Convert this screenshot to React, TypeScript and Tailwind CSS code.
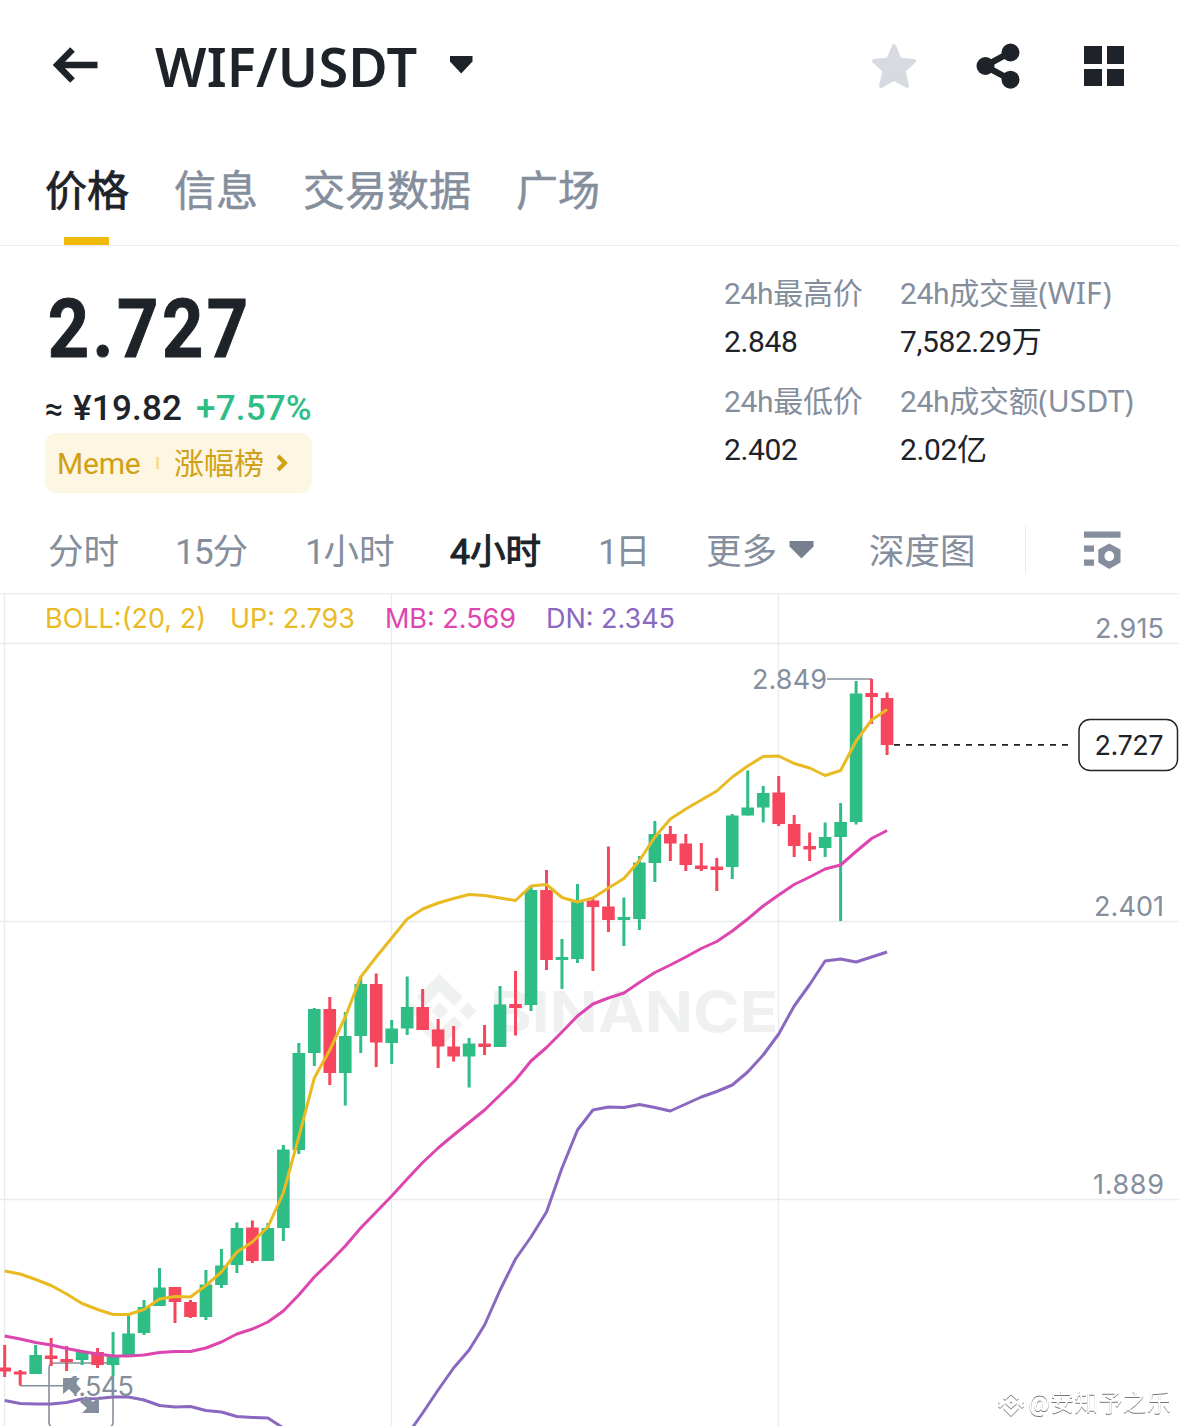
import React from "react";

type Candle = [color: "g" | "r", high: number, top: number, bottom: number, low: number];

const X0 = 4.7;
const STEP = 15.48;
const GREEN = "#2ebd85";
const RED = "#f6465d";

const candles: Candle[] = [
  ["r", 1345, 1367.5, 1371.5, 1377], ["r", 1370, 1371.5, 1374.5, 1385.5], ["g", 1345, 1355, 1374, 1374],
  ["r", 1338, 1355.5, 1359, 1366], ["r", 1346, 1359, 1362, 1371], ["g", 1350, 1352, 1360, 1365],
  ["r", 1348, 1352, 1365, 1368], ["g", 1332, 1355, 1365, 1376], ["g", 1313, 1333.5, 1355, 1355],
  ["g", 1300, 1307, 1333, 1335], ["g", 1268, 1287.5, 1306, 1306], ["r", 1287, 1287, 1302, 1323],
  ["r", 1300, 1302, 1317, 1318], ["g", 1270, 1284.5, 1317, 1320], ["g", 1249, 1265.5, 1285, 1288],
  ["g", 1222.5, 1228, 1265, 1273], ["r", 1220.5, 1227.5, 1261, 1263], ["g", 1223, 1228, 1261, 1261],
  ["g", 1145, 1149.5, 1228, 1241], ["g", 1043, 1053, 1150, 1154], ["g", 1008, 1009, 1053, 1066],
  ["r", 997, 1009, 1073, 1085], ["g", 1012, 1036, 1073, 1105.5], ["g", 976, 984, 1036, 1053],
  ["r", 973.5, 984, 1042.5, 1067], ["g", 1020, 1028.5, 1043, 1064], ["g", 976.5, 1007, 1028.5, 1035],
  ["r", 989, 1007, 1030, 1030], ["r", 1019, 1029.5, 1046.5, 1068], ["r", 1026, 1046.5, 1056.5, 1061.5],
  ["g", 1038, 1043.5, 1056.5, 1087.5], ["r", 1025, 1043.5, 1047, 1055], ["g", 986, 1004.5, 1047, 1047],
  ["r", 971, 1004, 1008, 1035.5], ["g", 886, 890, 1005, 1011], ["r", 870, 890, 960, 970],
  ["g", 939, 957, 960, 989], ["g", 884, 902, 959, 963], ["r", 899, 900.5, 907, 971],
  ["r", 846.5, 906.5, 920, 932], ["g", 897.5, 917, 920, 946], ["g", 856, 862.5, 919, 930],
  ["g", 821, 834, 863, 882], ["r", 826, 834, 843.5, 861], ["r", 834, 843.5, 865, 871],
  ["r", 843, 865.5, 869, 871], ["r", 858, 866.5, 870, 891], ["g", 814, 815.5, 867, 879],
  ["g", 770.5, 807.5, 815.5, 815.5], ["g", 786, 793, 807.5, 822.5], ["r", 776, 792.5, 824, 826],
  ["r", 815, 824, 846, 857], ["r", 832.5, 846, 849.5, 861], ["g", 822.5, 837, 848, 857],
  ["g", 803, 822, 837, 921], ["g", 681, 693.5, 822, 824.5], ["r", 679, 693, 697, 724],
  ["r", 692.5, 698, 745, 755],
];

const upper = [
  1271, 1274, 1279.5, 1285.5, 1294, 1303.5, 1309.5, 1314.5, 1314.5, 1309.5, 1299, 1296.5, 1297, 1285.5, 1272,
  1252, 1242, 1227, 1193, 1137, 1078, 1050, 1017, 977, 957, 938, 919, 909, 903, 898.5, 894.5, 895.5, 898, 900.5,
  886, 884.5, 897.5, 902, 898, 888, 878.5, 860.5, 837, 819, 809, 800, 791, 777, 766, 756.5, 756, 763.5, 768,
  775.5, 770.5, 741, 720, 709.5,
];
const middle = [
  1336, 1339, 1342.5, 1345, 1348.5, 1351.5, 1354, 1356, 1356, 1355, 1352.5, 1351.5, 1351.5, 1348, 1342, 1334,
  1329, 1322, 1311, 1295, 1277, 1262, 1246, 1228, 1212, 1196, 1179, 1162.5, 1148, 1135, 1122.5, 1110, 1095,
  1080, 1061, 1047.5, 1032, 1016, 1004, 998, 993, 982.5, 972.5, 965, 957, 948.5, 941.5, 931, 919, 906, 895,
  884.5, 877, 869, 865, 851.5, 838.5, 830.5,
];
const lower = [
  1400.5, 1403.5, 1404, 1404, 1402.5, 1399, 1398.5, 1397, 1397, 1400, 1405.5, 1407, 1406.5, 1410.5, 1412,
  1416.5, 1417.5, 1418, 1428, 1440, 1450, 1458, 1462, 1462, 1458, 1450, 1435, 1413, 1390, 1368, 1350, 1325,
  1290, 1259, 1237, 1212, 1168, 1130, 1110, 1107, 1107.5, 1104.5, 1107.5, 1111, 1104, 1097, 1091.5, 1085,
  1072, 1055, 1034, 1006, 984.5, 961, 959, 962, 957, 952,
];

const toPoints = (ys: number[]) => ys.map((y, i) => `${(X0 + STEP * i).toFixed(1)},${y}`).join(" ");

function Header() {
  return (
    <header className="flex h-[132px] items-center pl-[52px] pr-[55px]">
      <svg className="-mt-[2px] h-[42px] w-[46px]" viewBox="0 0 46 42" fill="none" stroke="#1e2329" strokeWidth="6.500">
        <path d="M45.500 21H6M20.500 5.500L5.300 21L20.500 36.500" />
      </svg>
      <h1 className="ml-[57px] w-[264px] whitespace-nowrap font-['Noto_Sans',sans-serif] text-[54px] font-semibold leading-none tracking-[0.2px] text-[#1e2329]">
        WIF/USDT
      </h1>
      <svg className="-mt-[2px] ml-[30px] h-[20px] w-[24px]" viewBox="0 0 24 20" fill="#1e2329">
        <path d="M1 1H23.500V6.500L12.200 18.500L1 6.500Z" />
      </svg>
      <svg className="ml-auto h-[46px] w-[46px]" viewBox="0 0 46 46" fill="#d8dae1" stroke="#d8dae1" strokeWidth="4" strokeLinejoin="round">
        <path d="M23 3L28.500 16.500L43 18L32.500 27.800L36 43L23 35.800L10 43L13.500 27.800L3 18L17.500 16.500Z" />
      </svg>
      <svg className="ml-[59px] h-[46px] w-[44px]" viewBox="0 0 44 46" fill="#1e2329">
        <path d="M9 23L34 9.500M9 23L34 36.500" stroke="#1e2329" strokeWidth="6.500" />
        <circle cx="9.500" cy="23" r="9" />
        <circle cx="34.500" cy="9.500" r="9" />
        <circle cx="34.500" cy="36.700" r="9" />
      </svg>
      <div className="ml-[64px] grid grid-cols-2 gap-[5px]">
        <i className="size-[17.5px] bg-[#1e2329]" />
        <i className="size-[17.5px] bg-[#1e2329]" />
        <i className="size-[17.5px] bg-[#1e2329]" />
        <i className="size-[17.5px] bg-[#1e2329]" />
      </div>
    </header>
  );
}

function Tabs() {
  return (
    <nav className="flex h-[114px] items-start gap-[45px] border-b border-[#eaecef] pl-[45px] pt-[32px] text-[42px] leading-[56px] text-[#848e9c] [-webkit-text-stroke:0.5px]">
      <div className="flex h-[81px] flex-col items-center justify-between text-[#1e2329] [-webkit-text-stroke:0.8px]">
        <span>价格</span>
        <i className="mr-[1px] h-[8px] w-[45px] bg-[#f0b90b]" />
      </div>
      <span>信息</span>
      <span>交易数据</span>
      <span>广场</span>
    </nav>
  );
}

function Stat({ label, unit, value }: { label: string; unit?: string; value: string }) {
  return (
    <div className="h-[108px] whitespace-nowrap text-[30px]">
      <div className="flex h-[48px] leading-[40px] text-[#848e9c]">
        <span className="tracking-[-0.3px]">{label}</span>
        {unit && <span className="-mt-[1px] font-['Noto_Sans',sans-serif] tracking-[0.2px]">{unit}</span>}
      </div>
      <div className="leading-[40px] tracking-[-0.4px] text-[#1e2329]">{value}</div>
    </div>
  );
}

function Summary() {
  return (
    <section className="flex h-[262px] pl-[45px]">
      <div className="w-[679px]">
        <div className="mt-[37px] h-[92px] origin-left scale-x-[0.88] pl-[3px] text-[82px] font-bold leading-[92px] tracking-[4px] text-[#1e2329] [-webkit-text-stroke:1px]">2.727</div>
        <div className="mt-[14px] flex h-[40px] items-center whitespace-nowrap text-[35px] font-medium leading-[40px] text-[#1e2329]">
          <span className="w-[28px] text-[32px]">≈</span>
          <span className="w-[123px] tracking-[0.2px]">¥19.82</span>
          <span className="tracking-[0.2px] text-[#2ebd85]">+7.57%</span>
        </div>
        <div className="mt-[4px] flex h-[60px] w-[267px] items-center rounded-[12px] bg-[#fdf6e2] pl-[12px] text-[30px] text-[#d0a117]">
          <span className="w-[84px] tracking-[-0.2px]">Meme</span>
          <i className="ml-[15px] h-[12px] w-[3px] bg-[#f5dfa0]" />
          <span className="ml-[15px] w-[90px]">涨幅榜</span>
          <svg className="ml-[12px] h-[18px] w-[13px]" viewBox="0 0 13 18" fill="none" stroke="#d0a117" strokeWidth="4">
            <path d="M2 2L9 9L2 16" />
          </svg>
        </div>
      </div>
      <div className="grid grid-cols-[176px_1fr] content-start pt-[28px]">
        <Stat label="24h最高价" value="2.848" />
        <Stat label="24h成交量" unit="(WIF)" value="7,582.29万" />
        <Stat label="24h最低价" value="2.402" />
        <Stat label="24h成交额" unit="(USDT)" value="2.02亿" />
      </div>
    </section>
  );
}

function Intervals() {
  return (
    <nav className="flex h-[85px] items-center whitespace-nowrap pl-[48px] pt-[2px] text-[35.5px] leading-[48px] text-[#848e9c]">
      <span className="w-[127px]">分时</span>
      <span className="w-[130px]"><span className="tracking-[-1.2px]">15</span>分</span>
      <span className="w-[145px]"><span className="tracking-[-1.5px]">1</span>小时</span>
      <span className="w-[148px] text-[#1e2329] [-webkit-text-stroke:1.1px]">4小时</span>
      <span className="w-[108px]"><span className="tracking-[-3px]">1</span>日</span>
      <span className="w-[83px]">更多</span>
      <svg className="-mt-[3px] h-[20px] w-[25px]" viewBox="0 0 25 20" fill="#76808f">
        <path d="M0.500 1H24.500V6.500L12.500 18.500L0.500 6.500Z" />
      </svg>
      <span className="ml-[55px] w-[156px]">深度图</span>
      <i className="-mt-[5px] h-[49px] w-px bg-[#eaecef]" />
      <svg className="-mt-[4px] ml-[58px] h-[38px] w-[37px]" viewBox="0 0 37 38" fill="#848e9c">
        <path d="M0 0.500H36.500V6.700H0ZM0 14.500H10V20.700H0ZM0 28.500H10V34.700H0Z" />
        <path fillRule="evenodd" d="M25.300 12.500L36.500 18.500V31.500L25.300 38L14.300 31.500V18.500ZM25.300 20A4.900 5.100 0 1 0 25.300 30.200A4.900 5.100 0 1 0 25.300 20Z" />
      </svg>
    </nav>
  );
}

function Chart() {
  return (
    <svg className="block h-[833px] w-[1179px] font-[Inter,sans-serif]" viewBox="0 593 1179 833" fontSize="27">
      <g stroke="#e9ebee" strokeWidth="1.300">
        <path d="M0 593.600H1179M0 643.500H1179M0 921.500H1179M0 1199.500H1179" />
        <path d="M4.500 593V1426M391.500 593V1426M778.500 593V1426" />
      </g>

      <g fill="#eff1f1">
        <path d="M439.700 974L463 997L454 1006L439.700 992L425.400 1006L416.400 997ZM439.700 1048L463 1025L454 1016L439.700 1030L425.400 1016L416.400 1025Z" />
        <path d="M439.700 1002.500L448.200 1011L439.700 1019.500L431.200 1011ZM468 1002.500L476.500 1011L468 1019.500L459.500 1011ZM411.500 1002.500L420 1011L411.500 1019.500L403 1011Z" />
        <text x="490" y="1031.500" fontSize="56.500" fontWeight="700" textLength="288" lengthAdjust="spacingAndGlyphs">BINANCE</text>
      </g>

      <g fill="none" stroke="#848e9c" strokeWidth="1.600">
        <rect x="49" y="1363" width="64" height="64.500" rx="5" />
        <path d="M20 1385.700H64M827 679H872" />
      </g>

      {candles.map(([c, high, top, bottom, low], i) => {
        const x = X0 + STEP * i;
        return (
          <g key={i} fill={c === "g" ? GREEN : RED}>
            <rect x={x - 1.5} y={high} width="3" height={low - high} />
            <rect x={x - 6.3} y={top} width="12.6" height={bottom - top} />
          </g>
        );
      })}

      <g fill="none" strokeWidth="3" strokeLinejoin="round">
        <polyline points={toPoints(upper)} stroke="#eaba23" />
        <polyline points={toPoints(middle)} stroke="#dd46ae" />
        <polyline points={toPoints(lower)} stroke="#8a68c0" />
      </g>

      <g fill="#848e9c">
        <text x="68" y="1396" textLength="66">1.545</text>
        <path d="M63 1378H80L75.500 1383L81 1389L75 1395L69 1389L63 1394ZM99 1413H82L87 1408L80 1402L86 1396L93 1402L99 1397Z" />
        <text x="752" y="689" textLength="75">2.849</text>
        <text x="1095" y="638" textLength="69">2.915</text>
        <text x="1094" y="916" textLength="70">2.401</text>
        <text x="1093" y="1194" textLength="71">1.889</text>
      </g>

      <path d="M894 744.800H1069" stroke="#1e2329" strokeWidth="1.700" strokeDasharray="6 6" />
      <rect x="1079" y="719.500" width="98.500" height="51" rx="11" fill="#fff" stroke="#1e2329" strokeWidth="1.500" />
      <text x="1094.500" y="755" textLength="69" fill="#1e2329">2.727</text>

      <text x="45" y="627.500" textLength="161" fill="#eaba23">BOLL:(20, 2)</text>
      <text x="230" y="627.500" textLength="125" fill="#eaba23">UP: 2.793</text>
      <text x="385" y="627.500" textLength="131" fill="#dd46ae">MB: 2.569</text>
      <text x="546" y="627.500" textLength="129" fill="#8a68c0">DN: 2.345</text>
    </svg>
  );
}

function Signature() {
  return (
    <div className="absolute bottom-[5px] right-[8px] flex items-center gap-[3px] whitespace-nowrap text-[24px] leading-[36px] text-white [filter:drop-shadow(0.5px_1px_0.6px_#777)]">
      <svg className="h-[26px] w-[28px]" viewBox="0 0 28 26" fill="none" stroke="#fff" strokeWidth="3">
        <path d="M7 9L14 2.500L21 9M2 11L5 14L2 17M26 11L23 14L26 17M7 17L14 24L21 17M14 9.500L18 13L14 16.500L10 13Z" />
      </svg>
      <span className="tracking-[0.2px]">@安知予之乐</span>
    </div>
  );
}

export default function App() {
  return (
    <main className="relative h-[1426px] w-[1179px] overflow-hidden bg-white font-[Roboto,'Noto_Sans_CJK_SC',sans-serif]">
      <Header />
      <Tabs />
      <Summary />
      <Intervals />
      <Chart />
      <Signature />
    </main>
  );
}
